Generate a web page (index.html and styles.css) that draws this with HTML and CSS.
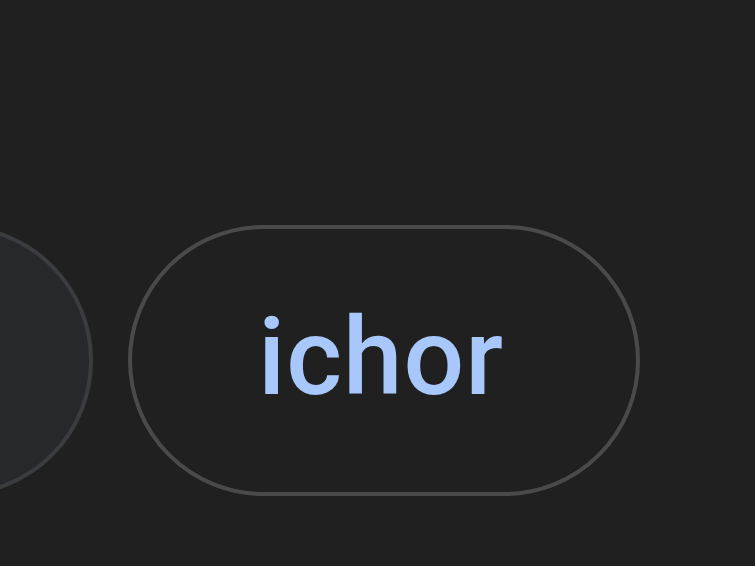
FILE: index.html
```html
<!DOCTYPE html>
<html>
<head>
<meta charset="utf-8">
<link rel="stylesheet" href="styles.css">
</head>
<body>
<div class="row">
  <div class="chip chip-prev"></div>
  <div class="chip chip-main"><span class="label">ichor</span></div>
</div>
</body>
</html>
```
FILE: styles.css
```css
html, body {
  margin: 0;
  padding: 0;
  background: #202020;
  width: 755px;
  height: 566px;
  overflow: hidden;
}
.row {
  display: flex;
  align-items: center;
  gap: 35px;
  padding-top: 225px;
}
.chip {
  box-sizing: border-box;
  height: 271px;
  border-radius: 136px;
  flex: none;
}
.chip-prev {
  width: 300px;
  margin-left: -207px;
  background: #27282b;
  border: 4px solid #3b3c3f;
}
.chip-main {
  width: 512px;
  border: 4px solid #4a4a4a;
  display: flex;
  align-items: center;
  justify-content: center;
}
.label {
  font-family: Roboto, "Liberation Sans", sans-serif;
  font-weight: 500;
  font-size: 107px;
  letter-spacing: 1px;
  color: #a8c7fa;
  line-height: 1;
  padding-right: 6px;
  padding-bottom: 6px;
}
```
